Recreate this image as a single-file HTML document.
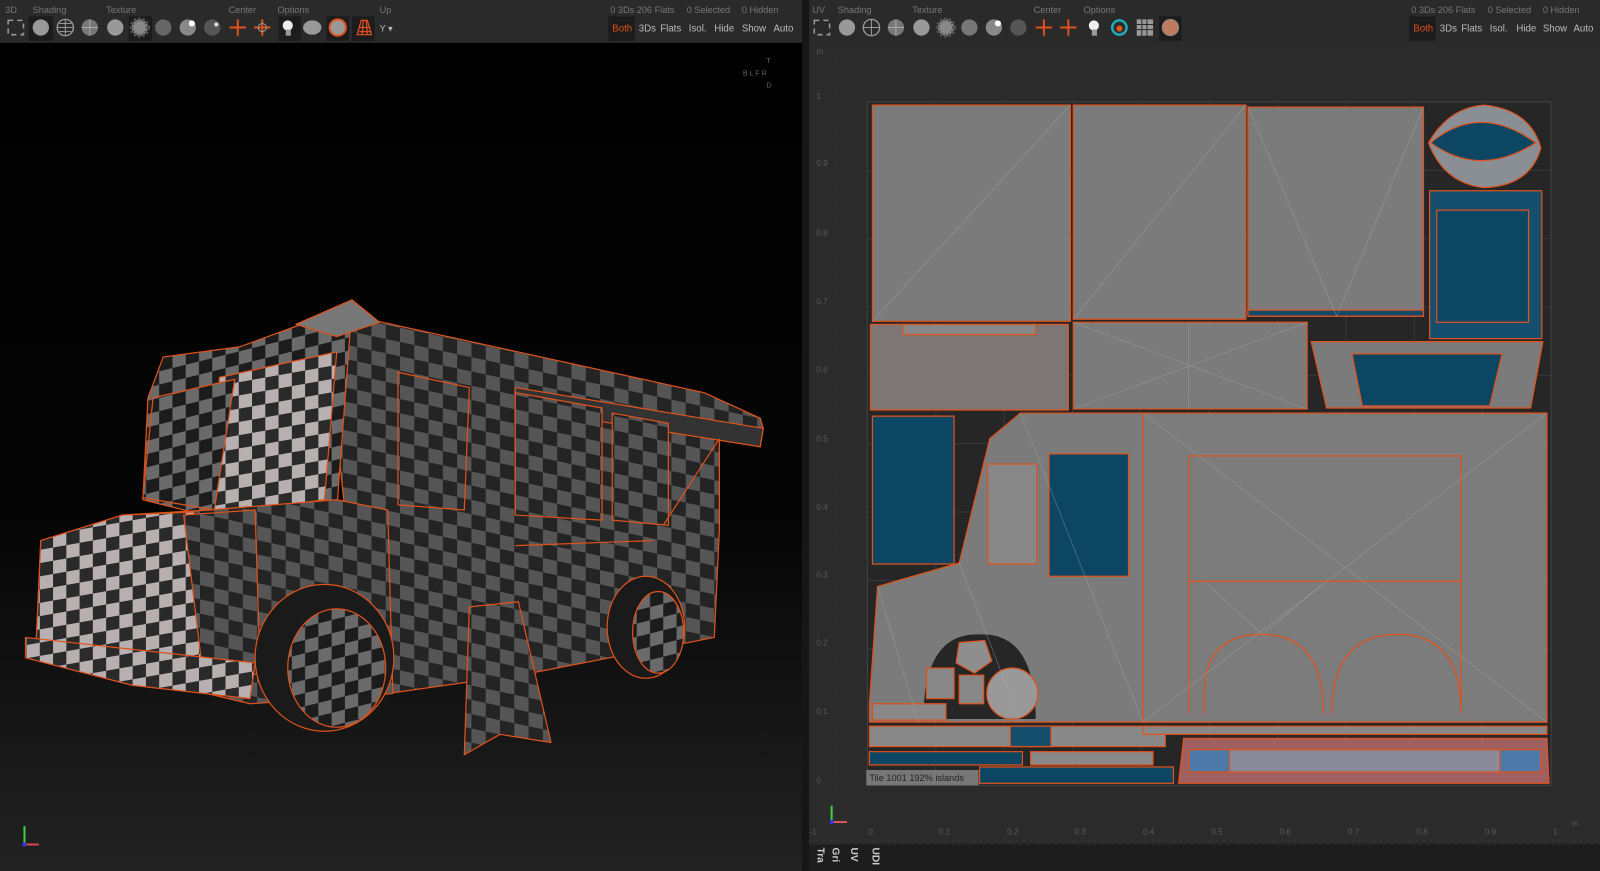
<!DOCTYPE html>
<html><head><meta charset="utf-8"><style>
html,body{margin:0;padding:0;background:#1e1e1e;overflow:hidden}
svg{display:block}
text{font-family:"Liberation Sans",sans-serif}
</style></head><body>
<svg width="1600" height="871" viewBox="0 0 1568 854" preserveAspectRatio="none" xmlns="http://www.w3.org/2000/svg">
<defs>
<linearGradient id="vp" x1="0" y1="0" x2="0" y2="1">
<stop offset="0" stop-color="#000"/><stop offset="0.6" stop-color="#050505"/><stop offset="1" stop-color="#222"/></linearGradient>
<pattern id="ck" width="28" height="28" patternUnits="userSpaceOnUse" patternTransform="skewY(12)">
<rect width="28" height="28" fill="#555"/><rect width="14" height="14" fill="#242424"/><rect x="14" y="14" width="14" height="14" fill="#242424"/></pattern>
<pattern id="ckl" width="26" height="26" patternUnits="userSpaceOnUse" patternTransform="skewY(-10)">
<rect width="26" height="26" fill="#b8b0b0"/><rect width="13" height="13" fill="#2a2a2a"/><rect x="13" y="13" width="13" height="13" fill="#2a2a2a"/></pattern>
<pattern id="ckm" width="26" height="26" patternUnits="userSpaceOnUse" patternTransform="skewY(-14)">
<rect width="26" height="26" fill="#6a6a6a"/><rect width="13" height="13" fill="#1c1c1c"/><rect x="13" y="13" width="13" height="13" fill="#1c1c1c"/></pattern>
</defs>
<rect x="0" y="0" width="786" height="854" fill="url(#vp)"/>
<rect x="0" y="0" width="786" height="42" fill="#2a2a2a"/>
<rect x="786" y="0" width="7" height="854" fill="#161616"/>
<rect x="793" y="0" width="775" height="854" fill="#2b2b2b"/>
<rect x="793" y="0" width="775" height="42" fill="#2a2a2a"/>
<rect x="793" y="828" width="775" height="26" fill="#1d1d1d"/>

<g font-size="9" fill="#777">
<text x="5" y="13">3D</text><text x="32" y="13">Shading</text><text x="104" y="13">Texture</text><text x="224" y="13">Center</text><text x="272" y="13">Options</text><text x="372" y="13">Up</text>
<text x="598" y="13">0 3Ds 206 Flats</text><text x="673" y="13">0 Selected</text><text x="727" y="13">0 Hidden</text>
<text x="796" y="13">UV</text><text x="821" y="13">Shading</text><text x="894" y="13">Texture</text><text x="1013" y="13">Center</text><text x="1062" y="13">Options</text>
<text x="1383" y="13">0 3Ds 206 Flats</text><text x="1458" y="13">0 Selected</text><text x="1512" y="13">0 Hidden</text>
</g>
<rect x="596" y="16" width="26" height="24" fill="#1c1c1c"/><rect x="1381" y="16" width="26" height="24" fill="#1c1c1c"/>
<g font-size="9.5" fill="#bbb">
<text x="600" y="31" fill="#e0521c">Both</text><text x="626" y="31">3Ds</text><text x="647" y="31">Flats</text><text x="675" y="31">Isol.</text><text x="700" y="31">Hide</text><text x="727" y="31">Show</text><text x="758" y="31">Auto</text>
<text x="1385" y="31" fill="#e0521c">Both</text><text x="1411" y="31">3Ds</text><text x="1432" y="31">Flats</text><text x="1460" y="31">Isol.</text><text x="1486" y="31">Hide</text><text x="1512" y="31">Show</text><text x="1542" y="31">Auto</text>
<text x="372" y="31" font-size="9">Y ▾</text>
</g>
<g>
<rect x="8" y="20" width="15" height="14" fill="none" stroke="#999" stroke-width="1.5" stroke-dasharray="5 4"/>
<rect x="28" y="16" width="24" height="24" fill="#1c1c1c"/>
<circle cx="40" cy="27" r="8" fill="#999"/>
<circle cx="64" cy="27" r="8" fill="none" stroke="#999" stroke-width="1.3"/><path d="M56 27h16M64 19v16M58 23h12M58 31h12" stroke="#999" fill="none"/>
<circle cx="88" cy="27" r="8" fill="#777"/><path d="M80 27h16M88 19v16" stroke="#aaa"/>
<circle cx="113" cy="27" r="8" fill="#999"/>
<rect x="126" y="16" width="23" height="24" fill="#1c1c1c"/>
<circle cx="137" cy="27" r="8" fill="#888"/><circle cx="137" cy="27" r="8" fill="none" stroke="#555" stroke-dasharray="2 2" stroke-width="4"/>
<circle cx="160" cy="27" r="8" fill="#666"/>
<circle cx="184" cy="27" r="8" fill="#888"/><circle cx="188" cy="23" r="3" fill="#fff"/>
<circle cx="208" cy="27" r="8" fill="#555"/><circle cx="212" cy="24" r="2" fill="#ddd"/>
</g>
<g stroke="#e0521c" stroke-width="2">
<path d="M225 27h16M233 19v16"/><path d="M249 27h16M257 19v16"/><circle cx="257" cy="27" r="4" fill="none" stroke="#999" stroke-width="1"/>
<path d="M1015 27h16M1023 19v16"/><path d="M1039 27h16M1047 19v16"/>
</g>
<rect x="273" y="16" width="22" height="24" fill="#1c1c1c"/>
<circle cx="282" cy="25" r="5" fill="#eee"/><rect x="280" y="29" width="5" height="6" fill="#999"/>
<ellipse cx="306" cy="27" rx="9" ry="7" fill="#999"/>
<rect x="320" y="16" width="22" height="24" fill="#1c1c1c"/><circle cx="331" cy="27" r="8" fill="#999" stroke="#e0521c" stroke-width="2"/>
<rect x="345" y="16" width="22" height="24" fill="#1c1c1c"/><path d="M350 34l4-14h6l4 14zM352 27h11M352 31h12M356 20l-1 14M359 20l1 14" stroke="#e0521c" fill="none" stroke-width="1.2"/>
<g transform="translate(790 0)">
<rect x="8" y="20" width="15" height="14" fill="none" stroke="#999" stroke-width="1.5" stroke-dasharray="5 4"/>
<circle cx="40" cy="27" r="8" fill="#999"/>
<circle cx="64" cy="27" r="8" fill="none" stroke="#999" stroke-width="1.3"/><path d="M56 27h16M64 19v16" stroke="#999"/>
<circle cx="88" cy="27" r="8" fill="#777"/><path d="M80 27h16M88 19v16" stroke="#aaa"/>
<circle cx="113" cy="27" r="8" fill="#999"/>
<circle cx="137" cy="27" r="8" fill="#888"/><circle cx="137" cy="27" r="8" fill="none" stroke="#555" stroke-dasharray="2 2" stroke-width="4"/>
<circle cx="160" cy="27" r="8" fill="#777"/>
<circle cx="184" cy="27" r="8" fill="#888"/><circle cx="188" cy="23" r="3" fill="#fff"/>
<circle cx="208" cy="27" r="8" fill="#555"/>
<circle cx="282" cy="25" r="5" fill="#eee"/><rect x="280" y="29" width="5" height="6" fill="#999"/>
<circle cx="307" cy="27" r="7" fill="none" stroke="#2ab" stroke-width="2.5"/><circle cx="307" cy="28" r="3" fill="#e0521c"/>
<rect x="324" y="19" width="16" height="16" fill="#999"/><path d="M324 24h16M324 29h16M329 19v16M334 19v16" stroke="#2a2a2a"/>
<rect x="346" y="16" width="22" height="24" fill="#1c1c1c"/><circle cx="357" cy="27" r="8" fill="#c07a60" stroke="#888"/>
</g>

<g font-size="7" fill="#666"><text x="751" y="62">T</text><text x="728" y="74">B L F R</text><text x="751" y="86">D</text></g>

<!-- truck -->
<g stroke="#e0521c" stroke-width="1.2" stroke-linejoin="round">
<polygon points="745,410 748,420 745,438 705,430 705,520 700,625 520,660 380,680 340,520 320,330 345,300 370,315 690,385" fill="url(#ck)"/>
<polygon points="505,380 748,420 745,438 505,400" fill="#333"/>
<polygon points="145,390 160,350 235,340 290,320 345,300 330,500 220,510 140,490" fill="url(#ckm)"/>
<polygon points="215,370 330,345 318,490 210,505" fill="url(#ckl)"/>
<polygon points="150,390 230,372 210,500 140,488" fill="url(#ckm)"/>
<polygon points="40,530 120,505 205,500 330,490 380,500 385,680 245,690 35,640" fill="url(#ck)"/>
<polygon points="40,530 120,505 190,502 200,650 35,640" fill="url(#ckl)"/>
<polygon points="180,505 250,500 255,660 200,670" fill="url(#ck)"/>
<polygon points="390,365 460,380 455,500 390,495" fill="url(#ck)"/>
<polygon points="505,385 590,400 590,510 505,505" fill="url(#ck)"/>
<polygon points="600,405 655,415 655,515 600,510" fill="url(#ck)"/>
<polygon points="25,625 250,650 245,685 130,672 25,645" fill="url(#ckl)"/>
<ellipse cx="318" cy="645" rx="68" ry="72" fill="#1a1a1a"/>
<ellipse cx="330" cy="655" rx="48" ry="58" fill="url(#ckm)"/>
<ellipse cx="633" cy="615" rx="38" ry="50" fill="#1a1a1a"/>
<ellipse cx="645" cy="620" rx="25" ry="40" fill="url(#ckm)"/>
<polygon points="460,595 508,590 540,728 490,720 455,740" fill="url(#ck)"/>
<polygon points="290,318 345,294 372,316 330,330" fill="#777"/>
<path d="M505 535 L640 530 M705 430 L650 515" fill="none"/>
</g>
<g stroke-width="2"><path d="M24 828V810" stroke="#4c4"/><path d="M24 828H38" stroke="#d44"/><circle cx="24" cy="828" r="2" fill="#33f"/></g>

<!-- UV area -->
<rect x="850" y="100" width="670" height="670" fill="#262626" stroke="#444"/>
<g stroke="#383838" stroke-width="1">
<path d="M850 167H1520M850 234H1520M850 301H1520M850 368H1520M850 435H1520M850 502H1520M850 569H1520M850 636H1520M850 703H1520M917 100V770M984 100V770M1051 100V770M1118 100V770M1185 100V770M1252 100V770M1319 100V770M1386 100V770M1453 100V770"/>
</g>
<g stroke="#e0521c" stroke-width="1.2">
<rect x="855" y="103" width="194" height="212" fill="#7b7b7b"/>
<rect x="1052" y="103" width="169" height="210" fill="#7b7b7b"/>
<rect x="1223" y="105" width="172" height="205" fill="#7b7b7b"/>
<rect x="1223" y="304" width="172" height="6" fill="#144a66"/>
<path d="M1400 140Q1420 105 1455 103Q1500 108 1510 145Q1500 182 1455 184Q1415 180 1400 140Z" fill="#8a8e95"/>
<path d="M1402 140Q1450 100 1505 140Q1450 175 1402 140Z" fill="#0d4663"/>
<rect x="1401" y="187" width="110" height="145" fill="#154f6d"/>
<rect x="1408" y="206" width="90" height="110" fill="#0d4663"/>
<polygon points="853,318 1047,318 1047,402 853,402" fill="#7e7575"/>
<rect x="885" y="318" width="130" height="10" fill="#888"/>
<rect x="1052" y="316" width="229" height="85" fill="#7b7b7b"/>
<polygon points="1285,335 1512,335 1500,400 1300,400" fill="#7b7b7b"/>
<polygon points="1325,347 1472,347 1460,398 1335,398" fill="#0d4663"/>
<rect x="855" y="408" width="80" height="145" fill="#0d4663"/>
<polygon points="852,690 860,575 940,552 970,430 1000,405 1516,405 1516,708 1000,708 852,708" fill="#7b7b7b"/>
<rect x="1120" y="405" width="396" height="303" fill="#7c7c7c"/>
<rect x="1165" y="447" width="267" height="123" fill="none"/>
<path d="M1165 570V700M1432 570V700M1180 700V680Q1180 622 1237 622Q1297 622 1297 700M1305 700Q1305 622 1370 622Q1432 622 1432 700" fill="none"/>
<rect x="1028" y="445" width="78" height="120" fill="#0d4663"/>
<rect x="968" y="455" width="48" height="98" fill="#888"/>
<path d="M905 705Q905 620 960 622Q1015 620 1015 705Z" fill="#262626" stroke="none"/>
<circle cx="992" cy="680" r="25" fill="#999"/>
<rect x="908" y="655" width="27" height="30" fill="#888"/>
<rect x="940" y="662" width="24" height="28" fill="#888"/>
<polygon points="940,630 965,628 972,648 955,660 937,650" fill="#8e8e8e"/>
<rect x="855" y="690" width="72" height="16" fill="#888"/>
<rect x="852" y="712" width="290" height="20" fill="#888"/>
<rect x="990" y="712" width="40" height="20" fill="#154f6d"/>
<rect x="1120" y="712" width="396" height="8" fill="#888"/>
<rect x="852" y="737" width="150" height="13" fill="#0d4663"/>
<rect x="1010" y="737" width="120" height="13" fill="#888"/>
<rect x="960" y="752" width="190" height="16" fill="#0d4663"/>
<polygon points="1160,724 1516,724 1518,768 1155,768" fill="#a06060"/>
<rect x="1165" y="735" width="345" height="22" fill="#8a8a9a"/>
<rect x="1165" y="735" width="40" height="22" fill="#4d79a8"/>
<rect x="1470" y="735" width="40" height="22" fill="#4d79a8"/>
</g>
<g stroke="#aaa" stroke-width="0.6" opacity="0.55" fill="none">
<path d="M855 315L1049 103M1052 313L1221 103M1223 105L1310 310L1395 105M1052 316L1281 401M1052 401L1281 316M1165 401V316M1120 405L1516 708M1516 405L1120 708M1000 405L1120 708M940 552L1000 708M860 575L900 708M1180 570L1237 622M1300 570L1237 622"/>
</g>
<rect x="849" y="755" width="110" height="15" fill="#777"/>
<text x="852" y="766" font-size="9" fill="#222">Tile 1001 192%  islands</text>

<g font-size="8" fill="#5a5a5a">
<text x="800" y="53">m</text>
<text x="800" y="97">1</text><text x="800" y="163">0.9</text><text x="800" y="231">0.8</text><text x="800" y="298">0.7</text><text x="800" y="365">0.6</text><text x="800" y="433">0.5</text><text x="800" y="500">0.4</text><text x="800" y="566">0.3</text><text x="800" y="633">0.2</text><text x="800" y="700">0.1</text><text x="800" y="768">0</text>
<text x="793" y="818">-1</text><text x="851" y="818">0</text><text x="920" y="818">0.1</text><text x="987" y="818">0.2</text><text x="1053" y="818">0.3</text><text x="1120" y="818">0.4</text><text x="1187" y="818">0.5</text><text x="1254" y="818">0.6</text><text x="1321" y="818">0.7</text><text x="1388" y="818">0.8</text><text x="1455" y="818">0.9</text><text x="1522" y="818">1</text><text x="1540" y="810">m</text>
</g>
<path d="M793 824H1568" stroke="#444" stroke-dasharray="1 6"/>
<path d="M820 60V800" stroke="#3c3c3c" stroke-dasharray="1 13"/>
<g stroke-width="2"><path d="M815 806V790" stroke="#4c4"/><path d="M815 806H830" stroke="#d55"/><circle cx="815" cy="806" r="2" fill="#33f"/></g>
<g font-size="10" fill="#ccc" font-weight="bold">
<text transform="translate(801 831) rotate(90)">Tra</text>
<text transform="translate(816 831) rotate(90)">Gri</text>
<text transform="translate(834 831) rotate(90)">UV</text>
<text transform="translate(855 831) rotate(90)">UDI</text>
</g>
</svg>
</body></html>
